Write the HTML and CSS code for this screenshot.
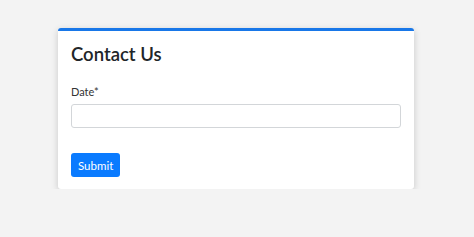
FILE: index.html
```html
<!DOCTYPE html>
<html>
<head>
<meta charset="utf-8">
<link rel="stylesheet" href="styles.css">
</head>
<body>
<div class="page">
  <form class="card">
    <h1 class="title">Contact Us</h1>
    <label class="label" for="date">Date*</label>
    <input class="input" id="date" type="text">
    <button class="btn" type="button">Submit</button>
  </form>
</div>
</body>
</html>
```
FILE: styles.css
```css
html, body {
  margin: 0;
  padding: 0;
  background: #f3f3f3;
  font-family: "Lato", "Noto Sans", sans-serif;
}
.page {
  display: flex;
  justify-content: center;
  padding: 28px 2px 0 0;
}
.card {
  width: 356px;
  box-sizing: border-box;
  background: #fff;
  border-top: 3px solid #1877e8;
  border-radius: 3px;
  box-shadow: 0 2px 7px rgba(0,0,0,0.18);
  padding: 10px 13px 12px;
  display: flex;
  flex-direction: column;
  align-items: flex-start;
}
.title {
  margin: 0;
  font-size: 18.5px;
  font-weight: 600;
  color: #212529;
  line-height: 26px;
}
.label {
  margin-top: 17px;
  font-size: 11px;
  color: #333;
  line-height: 16px;
}
.input {
  margin-top: 4px;
  width: 100%;
  box-sizing: border-box;
  height: 24px;
  border: 1px solid #d3d6d9;
  border-radius: 3px;
  outline: none;
}
.btn {
  margin-top: 25px;
  background: #0a7bff;
  color: #fff;
  border: none;
  border-radius: 3px;
  font-family: inherit;
  font-size: 11.5px;
  height: 24px;
  padding: 0 7px;
}
```
